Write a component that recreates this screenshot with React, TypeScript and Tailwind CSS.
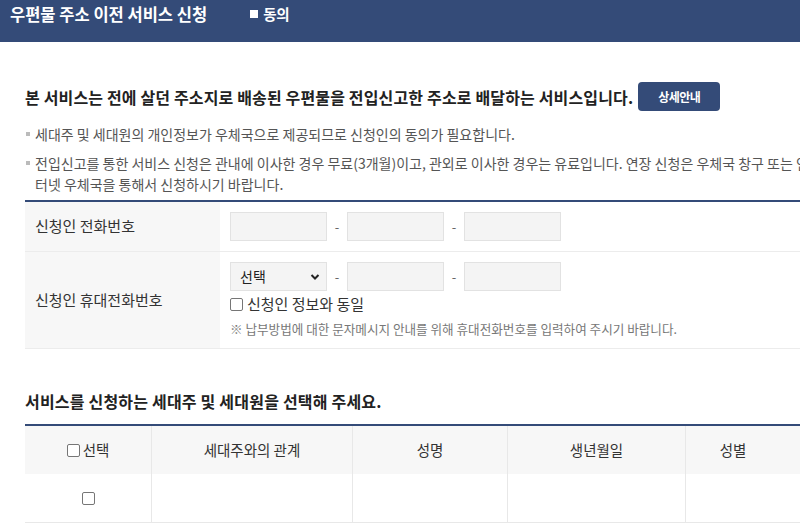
import React from "react";

const Check = () => (
  <span className="inline-block w-[13px] h-[13px] border border-[#767676] rounded-[2px] bg-white shrink-0" />
);

const Input = () => (
  <div className="w-[97px] h-[29px] bg-[#f4f4f4] border border-[#e2e2e2]" />
);

const Dash = () => (
  <div className="w-[20px] text-center text-[13px] text-[#666] leading-[29px]">-</div>
);

export default function App() {
  return (
    <div className="w-[800px] h-[526px] overflow-hidden bg-white font-['Noto_Sans_CJK_KR','Noto_Sans',sans-serif] text-[#333]">
      <div className="h-[42px] bg-[#344b78] flex items-start pt-[4px] pl-[10px]">
        <div className="text-white font-bold text-[16.5px] leading-[20px]">
          우편물 주소 이전 서비스 신청
        </div>
        <div className="ml-[43px] flex items-center text-white font-bold text-[14.5px] leading-[20px] tracking-[-0.3px]">
          <span className="inline-block w-[8px] h-[8px] bg-white mr-[5px]" />
          동의
        </div>
      </div>

      <div className="w-[840px] pl-[25px]">
        <div className="mt-[40px] flex items-center">
          <h2 className="text-[16px] font-bold leading-[24px] tracking-[0.15px] text-[#222]">
            본 서비스는 전에 살던 주소지로 배송된 우편물을 전입신고한 주소로 배달하는 서비스입니다.
          </h2>
          <div className="ml-[5px] w-[82px] h-[29px] rounded-[4px] bg-[#344b78] text-white text-[12px] font-bold flex items-center justify-center tracking-[-0.5px]">
            상세안내
          </div>
        </div>

        <div className="mt-[13px] flex items-start text-[14px] leading-[21px] text-[#555]">
          <span className="mt-[8px] mr-[5px] inline-block w-[4px] h-[4px] bg-[#bbb] shrink-0 ml-[1px]" />
          <p>세대주 및 세대원의 개인정보가 우체국으로 제공되므로 신청인의 동의가 필요합니다.</p>
        </div>
        <div className="mt-[8px] flex items-start text-[14px] leading-[21px] text-[#555]">
          <span className="mt-[8px] mr-[5px] inline-block w-[4px] h-[4px] bg-[#bbb] shrink-0 ml-[1px]" />
          <p className="whitespace-nowrap">
            전입신고를 통한 서비스 신청은 관내에 이사한 경우 무료(3개월)이고, 관외로 이사한 경우는 유료입니다. 연장 신청은 우체국 창구 또는 인
            <br />
            터넷 우체국을 통해서 신청하시기 바랍니다.
          </p>
        </div>

        <div className="mt-[5px] border-t-2 border-[#344b78]">
          <div className="flex border-b border-[#ececec]">
            <div className="w-[195px] bg-[#f7f7f7] pl-[10px] flex items-center text-[15px] text-[#333]">
              신청인 전화번호
            </div>
            <div className="flex-1 h-[49px] pl-[10px] flex items-center">
              <Input />
              <Dash />
              <Input />
              <Dash />
              <Input />
            </div>
          </div>
          <div className="flex border-b border-[#ececec]">
            <div className="w-[195px] bg-[#f7f7f7] pl-[10px] flex items-center text-[15px] text-[#333]">
              신청인 휴대전화번호
            </div>
            <div className="flex-1 pl-[10px] pt-[10px] pb-[10px]">
              <div className="flex items-center">
                <div className="w-[97px] h-[29px] bg-[#f4f4f4] border border-[#e2e2e2] flex items-center justify-between pl-[9px] pr-[6px] text-[14px] text-[#222]">
                  <span>선택</span>
                  <svg width="10" height="8" viewBox="0 0 10 8">
                    <path d="M1.5 2 L5 5.5 L8.5 2" fill="none" stroke="#222" strokeWidth="2" />
                  </svg>
                </div>
                <Dash />
                <Input />
                <Dash />
                <Input />
              </div>
              <div className="mt-[3px] flex items-center h-[20px] text-[15px] text-[#333]">
                <Check />
                <span className="ml-[4px]">신청인 정보와 동일</span>
              </div>
              <div className="mt-[6px] text-[12.6px] leading-[18px] text-[#777]">
                ※ 납부방법에 대한 문자메시지 안내를 위해 휴대전화번호를 입력하여 주시기 바랍니다.
              </div>
            </div>
          </div>
        </div>

        <h3 className="mt-[40px] text-[16px] font-bold leading-[24px] tracking-[0.2px] text-[#222]">
          서비스를 신청하는 세대주 및 세대원을 선택해 주세요.
        </h3>

        <div className="mt-[11px] border-t-2 border-[#344b78]">
          <div className="grid grid-cols-[126px_201px_155px_178px_1fr] bg-[#f7f7f7] h-[48px] text-[14.5px] text-[#333]">
            <div className="flex items-center justify-center gap-[3px]">
              <Check />
              <span>선택</span>
            </div>
            <div className="border-l border-[#e8e8e8] flex items-center justify-center">세대주와의 관계</div>
            <div className="border-l border-[#e8e8e8] flex items-center justify-center">성명</div>
            <div className="border-l border-[#e8e8e8] flex items-center justify-center">생년월일</div>
            <div className="border-l border-[#e8e8e8] flex items-center justify-center pr-[60px]">성별</div>
          </div>
          <div className="grid grid-cols-[126px_201px_155px_178px_1fr] h-[49px] border-b border-[#e8e8e8]">
            <div className="flex items-center justify-center">
              <Check />
            </div>
            <div className="border-l border-[#e8e8e8]" />
            <div className="border-l border-[#e8e8e8]" />
            <div className="border-l border-[#e8e8e8]" />
            <div className="border-l border-[#e8e8e8]" />
          </div>
        </div>
      </div>
    </div>
  );
}
